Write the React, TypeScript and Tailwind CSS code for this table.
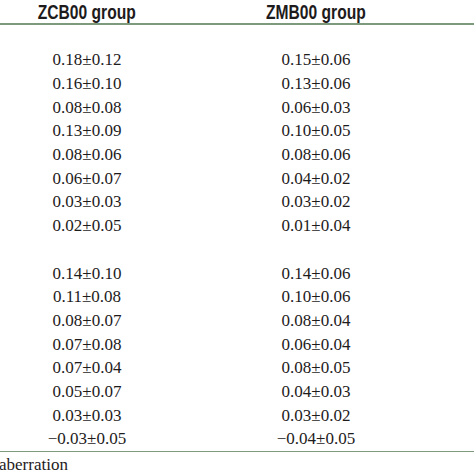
const first = [
  ["0.18±0.12", "0.15±0.06"],
  ["0.16±0.10", "0.13±0.06"],
  ["0.08±0.08", "0.06±0.03"],
  ["0.13±0.09", "0.10±0.05"],
  ["0.08±0.06", "0.08±0.06"],
  ["0.06±0.07", "0.04±0.02"],
  ["0.03±0.03", "0.03±0.02"],
  ["0.02±0.05", "0.01±0.04"],
];

const second = [
  ["0.14±0.10", "0.14±0.06"],
  ["0.11±0.08", "0.10±0.06"],
  ["0.08±0.07", "0.08±0.04"],
  ["0.07±0.08", "0.06±0.04"],
  ["0.07±0.04", "0.08±0.05"],
  ["0.05±0.07", "0.04±0.03"],
  ["0.03±0.03", "0.03±0.02"],
  ["−0.03±0.05", "−0.04±0.05"],
];

function Row({ a, b }: { a: string; b: string }) {
  return (
    <div className="grid grid-cols-[174px_284px_1fr] h-[23.7px] items-center">
      <div className="text-center">{a}</div>
      <div className="text-center">{b}</div>
      <div />
    </div>
  );
}

export default function App() {
  return (
    <div className="w-[474px] h-[474px] bg-white overflow-hidden text-[#1e1b1c]">
      {/* Header */}
      <div
        className="grid grid-cols-[174px_284px_1fr] h-[23px] items-center font-bold text-[20px] leading-none"
        style={{ fontFamily: '"Liberation Sans", Arial, sans-serif' }}
      >
        <div className="text-center">
          <span className="inline-block scale-x-[0.78]">ZCB00 group</span>
        </div>
        <div className="text-center">
          <span className="inline-block scale-x-[0.78]">ZMB00 group</span>
        </div>
        <div />
      </div>
      <div className="h-[2px] bg-[#7d9a7d]" />

      <div className="text-[17px] leading-none" style={{ fontFamily: '"Liberation Serif", "Times New Roman", serif' }}>
        <div className="h-[23px]" />
        {first.map(([a, b], i) => (
          <Row key={`f${i}`} a={a} b={b} />
        ))}
        <div className="h-[23.7px]" />
        {second.map(([a, b], i) => (
          <Row key={`s${i}`} a={a} b={b} />
        ))}
        <div className="h-[1.5px] bg-[#7d9a7d]" />
        <div className="pt-[4px] -ml-[1px]">aberration</div>
      </div>
    </div>
  );
}
